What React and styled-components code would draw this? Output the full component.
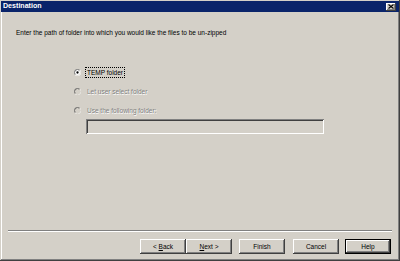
import React from "react";
import styled, { createGlobalStyle } from "styled-components";

const Global = createGlobalStyle`
  html, body { margin: 0; padding: 0; background: #d4d0c8; }
  body { font-family: "Liberation Sans", Arial, sans-serif; }
  * { box-sizing: border-box; }
`;

const Window = styled.div`
  width: 400px;
  height: 261px;
  background: #d4d0c8;
  padding: 1px 1px 2px 1px;
  display: flex;
  flex-direction: column;
  box-shadow: inset -1px -1px #404040, inset 1px 1px #d4d0c8,
    inset -2px -2px #808080, inset 2px 2px #ffffff;
`;

const TitleBar = styled.div`
  height: 11px;
  background: #0a246a;
  display: flex;
  align-items: center;
  justify-content: space-between;
  padding: 0 3px 0 2px;
`;

const Title = styled.span`
  color: #ffffff;
  font-weight: bold;
  font-size: 7.1px;
  line-height: 11px;
`;

const CloseButton = styled.div`
  width: 10px;
  height: 8px;
  background: #d4d0c8;
  display: flex;
  align-items: center;
  justify-content: center;
  box-shadow: inset -1px -1px #404040, inset 1px 1px #ffffff,
    inset -2px -2px #808080;
`;

const Body = styled.div`
  flex: 1;
  padding: 16px 0 0 15px;
  display: flex;
  flex-direction: column;
`;

const Prompt = styled.div`
  font-size: 6.5px;
  line-height: 9px;
  color: #000;
  white-space: nowrap;
`;

const Options = styled.div`
  margin: 30px 0 0 58px;
  display: flex;
  flex-direction: column;
  gap: 8px;
`;

const Row = styled.div`
  height: 11px;
  display: flex;
  align-items: center;
  gap: 4px;
`;

const Label = styled.span`
  font-size: 6.5px;
  line-height: 9px;
  padding: 0 1px;
  border: 1px dotted ${(p) => (p.$focused ? "#000" : "transparent")};
  color: ${(p) => (p.$disabled ? "#808080" : "#000")};
  text-shadow: ${(p) => (p.$disabled ? "0.6px 0.6px 0 #ffffff" : "none")};
  white-space: nowrap;
`;

const PathBox = styled.div`
  margin: -5px 0 0 12px;
  width: 238px;
  height: 15px;
  background: #d4d0c8;
  box-shadow: inset 1px 1px #808080, inset -1px -1px #ffffff,
    inset 2px 2px #404040, inset -2px -2px #d4d0c8;
`;

const Footer = styled.div`
  height: 29px;
  display: flex;
  flex-direction: column;
`;

const Separator = styled.div`
  margin: 0 7px;
  height: 2px;
  border-top: 1px solid #808080;
  border-bottom: 1px solid #ffffff;
`;

const Buttons = styled.div`
  margin-top: 7px;
  display: flex;
  justify-content: flex-end;
  padding-right: 8px;
`;

const Button = styled.div`
  width: 46px;
  height: 15px;
  margin-left: ${(p) => p.$gap}px;
  display: flex;
  align-items: center;
  justify-content: center;
  font-size: 6.5px;
  color: #000;
  white-space: pre;
  background: #d4d0c8;
  box-shadow: ${(p) =>
    p.$default
      ? "inset 0 0 0 1px #000, inset -2px -2px #404040, inset 2px 2px #ffffff, inset -3px -3px #808080"
      : "inset -1px -1px #404040, inset 1px 1px #ffffff, inset -2px -2px #808080, inset 2px 2px #d4d0c8"};
  u { text-decoration: underline; text-underline-offset: 1px; }
`;

const Radio = ({ checked, disabled }) => (
  <svg width="7" height="7" viewBox="0 0 12 12">
    <circle cx="6" cy="6" r="5.5" fill={disabled ? "#d4d0c8" : "#fff"} />
    <path d="M10.2 1.8 A5.5 5.5 0 0 0 1.8 10.2" fill="none" stroke="#808080" strokeWidth="1" />
    <path d="M9.5 2.5 A4.5 4.5 0 0 0 2.5 9.5" fill="none" stroke="#404040" strokeWidth="1" />
    <path d="M1.8 10.2 A5.5 5.5 0 0 0 10.2 1.8" fill="none" stroke="#ffffff" strokeWidth="1" />
    <path d="M2.5 9.5 A4.5 4.5 0 0 0 9.5 2.5" fill="none" stroke="#d4d0c8" strokeWidth="1" />
    {checked && <circle cx="6" cy="6" r="2" fill="#000" />}
  </svg>
);

export default function App() {
  return (
    <>
      <Global />
      <Window>
        <TitleBar>
          <Title>Destination</Title>
          <CloseButton>
            <svg width="6" height="5" viewBox="0 0 6 5">
              <path d="M0.5 0.5 L5.5 4.5 M5.5 0.5 L0.5 4.5" stroke="#000" strokeWidth="1.1" />
            </svg>
          </CloseButton>
        </TitleBar>
        <Body>
          <Prompt>Enter the path of folder into which you would like the files to be un-zipped</Prompt>
          <Options>
            <Row>
              <Radio checked />
              <Label $focused>TEMP folder</Label>
            </Row>
            <Row>
              <Radio disabled />
              <Label $disabled>Let user select folder</Label>
            </Row>
            <Row>
              <Radio disabled />
              <Label $disabled>Use the following folder:</Label>
            </Row>
            <PathBox />
          </Options>
        </Body>
        <Footer>
          <Separator />
          <Buttons>
            <Button $gap={0}>{"< "}<u>B</u>{"ack"}</Button>
            <Button $gap={0}><u>N</u>{"ext >"}</Button>
            <Button $gap={7}>Finish</Button>
            <Button $gap={8}>Cancel</Button>
            <Button $gap={6} $default>Help</Button>
          </Buttons>
        </Footer>
      </Window>
    </>
  );
}
